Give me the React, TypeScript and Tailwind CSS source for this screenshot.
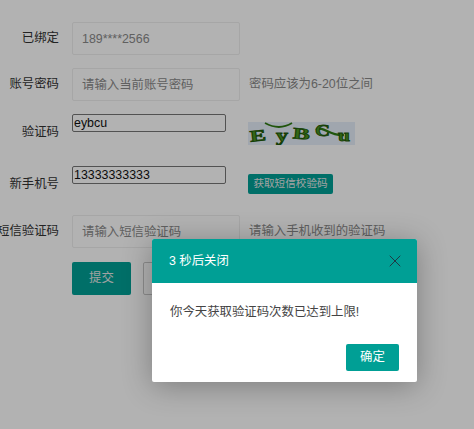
import { X } from "lucide-react";

const font = { fontFamily: '"Liberation Sans", "Noto Sans CJK SC", sans-serif' };

function Label({ text, className = "" }: { text: string; className?: string }) {
  return (
    <div className={`w-[59px] shrink-0 whitespace-nowrap flex justify-end text-[12.4px] text-[#333] ${className}`}>
      {text}
    </div>
  );
}

function FieldInput({ placeholder, value }: { placeholder?: string; value?: string }) {
  return (
    <input
      readOnly
      value={value}
      placeholder={placeholder}
      className="w-[168px] h-[33px] shrink-0 px-[9px] text-[12.4px] text-[#8a8a8a] placeholder:text-[#8a8a8a] border border-[#eeeeee] bg-white rounded-[2px] outline-none"
    />
  );
}

function NativeInput({ value }: { value: string }) {
  return (
    <input
      readOnly
      value={value}
      className="w-[154px] h-[18px] shrink-0 px-[1px] text-[12.4px] text-[#111] border border-[#767676] bg-white rounded-[2px] outline-none"
    />
  );
}

function Captcha() {
  return (
    <svg width="107" height="23" viewBox="0 0 107 23" className="shrink-0 bg-[#e6eefa]">
      <path d="M17 1 C26 6 36 6 44 1" stroke="#2f7a12" strokeWidth="1.8" fill="none" />
      <path d="M68 8 C76 3 80 14 96 13" stroke="#2f7a12" strokeWidth="2.4" fill="none" />
      <g fontFamily="Liberation Serif, serif" fontWeight="bold" fontSize="16" fill="#4c9420" stroke="#1f5a0a" strokeWidth="0.8">
        <text x="2" y="19" textLength="16" lengthAdjust="spacingAndGlyphs" transform="rotate(-6 9 14)">E</text>
        <text x="28" y="19" textLength="12" lengthAdjust="spacingAndGlyphs">y</text>
        <text x="45" y="17" textLength="17" lengthAdjust="spacingAndGlyphs" transform="rotate(5 52 12)">B</text>
        <text x="67" y="14" textLength="15" lengthAdjust="spacingAndGlyphs">C</text>
        <text x="90" y="19" textLength="12" lengthAdjust="spacingAndGlyphs">u</text>
      </g>
    </svg>
  );
}

export default function App() {
  return (
    <div className="relative w-[474px] h-[429px] overflow-hidden bg-white" style={font}>
      {/* form */}
      <div className="flex flex-col pt-[22px]">
        <div className="flex items-center gap-[13px] mb-[13px]">
          <Label text="已绑定" />
          <FieldInput value="189****2566" />
        </div>
        <div className="flex items-center gap-[13px] mb-[13px]">
          <Label text="账号密码" />
          <div className="flex items-center gap-[9px]">
            <FieldInput placeholder="请输入当前账号密码" />
            <span className="text-[12.4px] text-[#8a8a8a] whitespace-nowrap">密码应该为6-20位之间</span>
          </div>
        </div>
        <div className="flex items-start gap-[13px] h-[38px] mb-[14px]">
          <Label text="验证码" className="pt-[9px]" />
          <NativeInput value="eybcu" />
          <div className="ml-[9px] mt-[8px]">
            <Captcha />
          </div>
        </div>
        <div className="flex items-start gap-[13px] h-[35px] mb-[14px]">
          <Label text="新手机号" className="pt-[9px]" />
          <NativeInput value="13333333333" />
          <button className="ml-[9px] mt-[8px] w-[85px] h-[20px] bg-[#00a096] text-[#e8e8e8] text-[10.6px] rounded-[2px] whitespace-nowrap">
            获取短信校验码
          </button>
        </div>
        <div className="flex items-center gap-[13px] mb-[14px]">
          <Label text="短信验证码" />
          <div className="flex items-center gap-[9px]">
            <FieldInput placeholder="请输入短信验证码" />
            <span className="text-[12.4px] text-[#8a8a8a] whitespace-nowrap">请输入手机收到的验证码</span>
          </div>
        </div>
        <div className="flex gap-[12px] pl-[72px]">
          <button className="w-[59px] h-[33px] bg-[#00a096] text-[#e8e8e8] text-[12.4px] rounded-[2px]">提交</button>
          <button className="w-[59px] h-[33px] bg-white border border-[#c9c9c9] rounded-[2px]" />
        </div>
      </div>

      {/* overlay */}
      <div className="absolute inset-0 bg-black/30" />

      {/* dialog */}
      <div className="absolute left-[152px] top-[239px] w-[265px] h-[143px] flex flex-col bg-white rounded-[2px] shadow-[0_4px_30px_rgba(0,0,0,0.3)] overflow-hidden">
        <div className="h-[44px] shrink-0 flex items-center justify-between pl-[17px] pr-[12px] bg-[#009f95]">
          <span className="text-[12.4px] text-white">3 秒后关闭</span>
          <X size={20} strokeWidth={1.2} className="text-[#1f3a44] -mt-[1px]" />
        </div>
        <div className="flex-1 flex flex-col justify-between px-[18px] pt-[20px] pb-[11px]">
          <p className="text-[12.4px] leading-[18px] text-[#444] whitespace-nowrap">你今天获取验证码次数已达到上限!</p>
          <div className="flex justify-end">
            <button className="w-[53px] h-[27px] bg-[#009f95] text-white text-[12.4px] rounded-[2px]">确定</button>
          </div>
        </div>
      </div>
    </div>
  );
}
